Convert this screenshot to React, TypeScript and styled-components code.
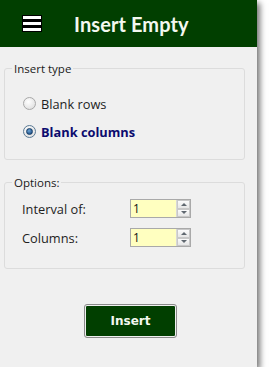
import React from "react";
import styled, { createGlobalStyle } from "styled-components";

const Global = createGlobalStyle`
  html, body { margin: 0; padding: 0; background: #ffffff; }
  body { font-family: "Open Sans", "Noto Sans", sans-serif; }
`;

const Panel = styled.div`
  width: 257px;
  height: 367px;
  background: #f0f0f0;
  box-shadow: 3px 3px 6px rgba(0, 0, 0, 0.55);
  display: flex;
  flex-direction: column;
`;

const Header = styled.header`
  height: 47px;
  background: #013f00;
  display: flex;
  align-items: center;
  padding-left: 22px;
  gap: 32px;
  box-sizing: border-box;
`;

const Burger = styled.div`
  width: 20px;
  display: flex;
  flex-direction: column;
  gap: 3px;
  padding: 1px 0;
  background: #000;
  span {
    display: block;
    height: 3px;
    margin: 0 1px;
    background: #ffffff;
  }
`;

const Title = styled.h1`
  margin: 0;
  color: #f4f8f0;
  font-family: Lato, "Open Sans", sans-serif;
  font-weight: 700;
  font-size: 20px;
  letter-spacing: 0.1px;
`;

const Body = styled.div`
  padding: 14px 12px 0 4px;
  display: flex;
  flex-direction: column;
  gap: 15px;
`;

const Group = styled.fieldset<{ $h: number }>`
  margin: 0;
  height: ${(p) => p.$h}px;
  box-sizing: border-box;
  border: 1px solid #dcdcdc;
  border-radius: 3px;
  padding: 0 0 0 17px;
  display: flex;
  flex-direction: column;
  justify-content: flex-start;
`;

const Legend = styled.legend`
  font-family: "Open Sans", sans-serif;
  font-size: 11.5px;
  color: #1a1a1a;
  padding: 0 2px 0 2px;
  margin-left: -10px;
`;

const Choices = styled.div`
  display: flex;
  flex-direction: column;
  gap: 9px;
  padding-top: 18px;
  padding-left: 1px;
`;

const Choice = styled.label<{ $on?: boolean }>`
  display: flex;
  align-items: center;
  gap: 5px;
  height: 19px;
  font-family: "Open Sans", sans-serif;
  font-size: 12.8px;
  font-weight: ${(p) => (p.$on ? 700 : 400)};
  color: ${(p) => (p.$on ? "#0b0b6e" : "#1e1e1e")};
`;

const Radio = styled.span<{ $on?: boolean }>`
  width: 11px;
  height: 11px;
  border-radius: 50%;
  border: 1px solid ${(p) => (p.$on ? "#5a7a95" : "#a8a8a8")};
  background: radial-gradient(circle at 40% 35%, #ffffff 0%, #e4e4e4 70%, #cfcfcf 100%);
  display: flex;
  align-items: center;
  justify-content: center;
  &::after {
    content: "";
    display: ${(p) => (p.$on ? "block" : "none")};
    width: 5px;
    height: 5px;
    border-radius: 50%;
    background: radial-gradient(circle at 40% 35%, #6fa6d6 0%, #1d4e86 80%);
    border: 1px solid #173d66;
  }
`;

const Rows = styled.div`
  display: grid;
  grid-template-columns: 108px 61px;
  row-gap: 10px;
  align-items: center;
  padding-top: 9px;
  padding-left: 0;
`;

const FieldLabel = styled.span`
  font-family: "Open Sans", sans-serif;
  font-size: 12.8px;
  color: #1e1e1e;
`;

const Spin = styled.div`
  display: flex;
  height: 19px;
  box-sizing: border-box;
  border: 1px solid #a9a9a9;
  background: #ffffc0;
`;

const SpinValue = styled.span`
  flex: 1;
  font-family: "Open Sans", sans-serif;
  font-size: 12px;
  line-height: 17px;
  padding-left: 2px;
  color: #111;
`;

const Arrows = styled.div`
  width: 13px;
  display: flex;
  flex-direction: column;
  border-left: 1px solid #d8d8d8;
  background: #f4f4f4;
`;

const Arrow = styled.span<{ $up?: boolean }>`
  flex: 1;
  display: flex;
  align-items: center;
  justify-content: center;
  border: 1px solid #c8c8c8;
  background: linear-gradient(#fbfbfb, #e6e6e6);
  &::after {
    content: "";
    border-left: 3px solid transparent;
    border-right: 3px solid transparent;
    ${(p) => (p.$up ? "border-bottom: 3px solid #606870;" : "border-top: 3px solid #606870;")}
  }
`;

const Footer = styled.div`
  display: flex;
  justify-content: center;
  padding: 36px 0 0 4px;
`;

const Button = styled.button`
  width: 91px;
  height: 32px;
  background: #013f00;
  border: 1px solid #f0f0f0;
  outline: 1px solid #8a8a8a;
  border-radius: 2px;
  color: #f4f8f0;
  font-family: "DejaVu Sans", Verdana, sans-serif;
  font-weight: 700;
  font-size: 12px;
  cursor: pointer;
`;

function Spinner({ value }: { value: string }) {
  return (
    <Spin>
      <SpinValue>{value}</SpinValue>
      <Arrows>
        <Arrow $up />
        <Arrow />
      </Arrows>
    </Spin>
  );
}

export default function App() {
  return (
    <>
      <Global />
      <Panel>
        <Header>
          <Burger>
            <span />
            <span />
            <span />
          </Burger>
          <Title>Insert Empty</Title>
        </Header>
        <Body>
          <Group $h={99}>
            <Legend>Insert type</Legend>
            <Choices>
              <Choice>
                <Radio />
                Blank rows
              </Choice>
              <Choice $on>
                <Radio $on />
                Blank columns
              </Choice>
            </Choices>
          </Group>
          <Group $h={94}>
            <Legend>Options:</Legend>
            <Rows>
              <FieldLabel>Interval of:</FieldLabel>
              <Spinner value="1" />
              <FieldLabel>Columns:</FieldLabel>
              <Spinner value="1" />
            </Rows>
          </Group>
        </Body>
        <Footer>
          <Button>Insert</Button>
        </Footer>
      </Panel>
    </>
  );
}
